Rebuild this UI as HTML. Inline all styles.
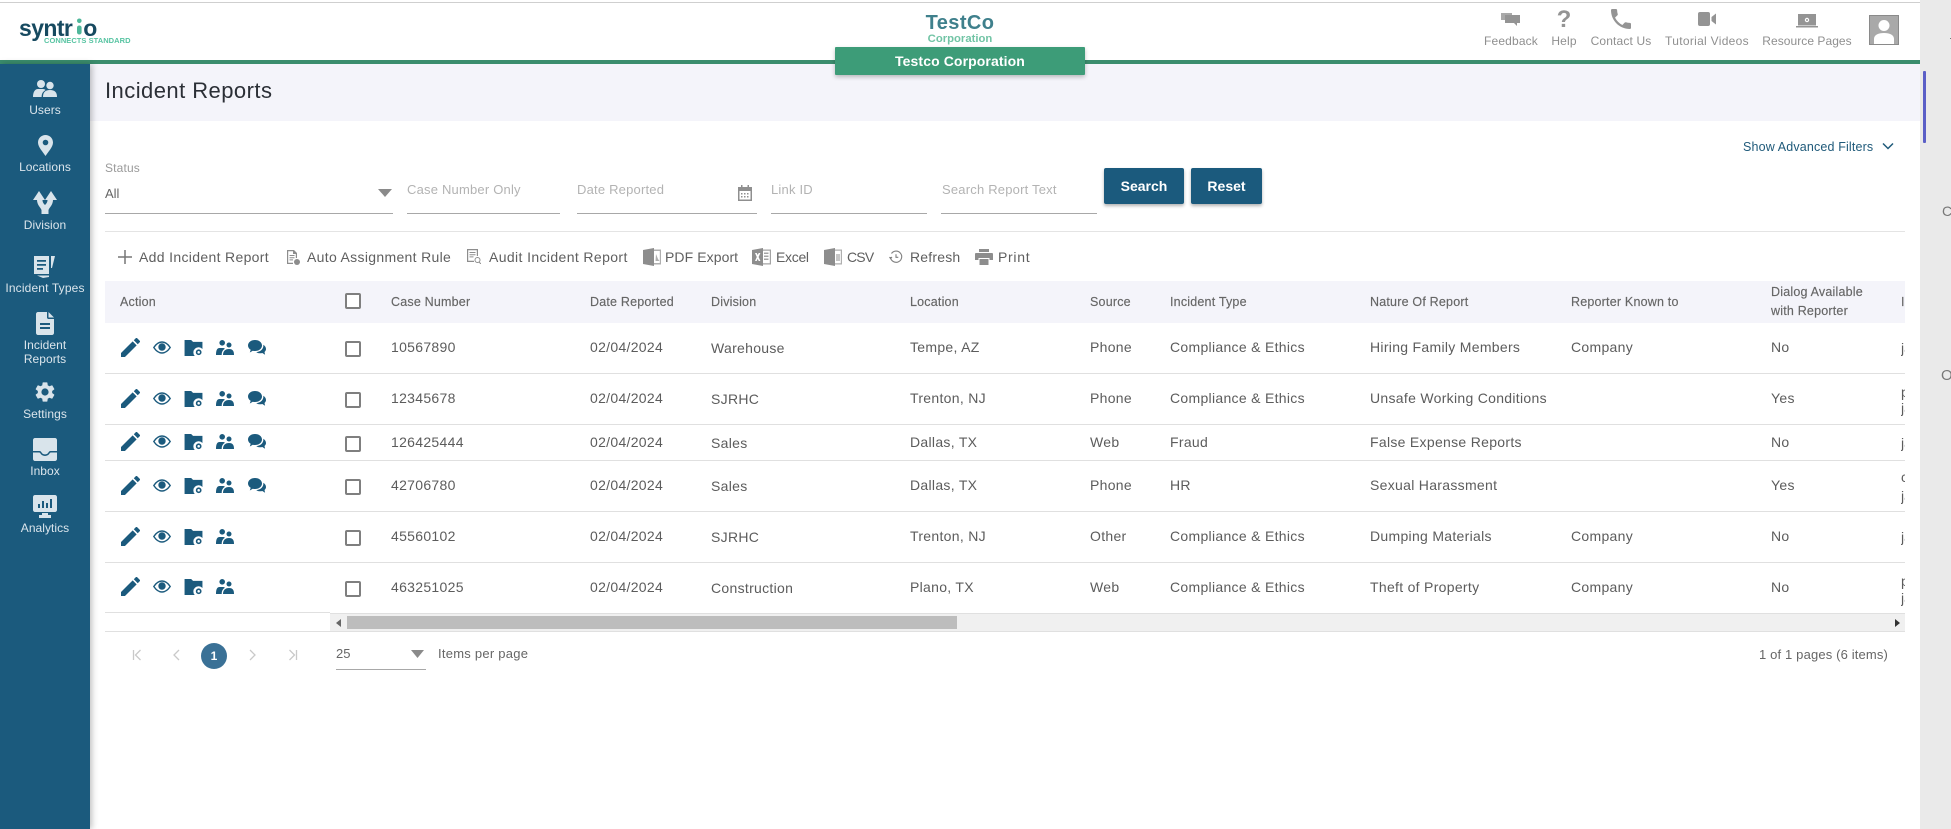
<!DOCTYPE html>
<html lang="en"><head><meta charset="utf-8"><title>Incident Reports</title>
<style>
html,body{margin:0;padding:0;width:1951px;height:829px;overflow:hidden;background:#fff}
body{position:relative;font-family:"Liberation Sans",sans-serif;color:#5c5c5c}
div,span,svg{position:absolute}
.t{white-space:nowrap;line-height:20px;height:20px}
#side{left:0;top:64px;width:90px;height:765px;background:#1b5a7d;box-shadow:2px 0 6px rgba(0,0,0,.25)}
.nl{left:0;width:90px;text-align:center;color:#dbe5ec;font-size:12px;line-height:14px;white-space:nowrap;letter-spacing:.05px}
.side-i{fill:#d9e4eb}
.hl{font-size:12px;color:#8f8f8f;letter-spacing:.15px;top:31px;transform:translateX(-50%)}
.hi{fill:#949494}
.ph{font-size:13px;color:#b3b3b3;letter-spacing:.2px}
.ul{height:1px;background:#a8a8a8;top:213px}
.btn{top:168px;height:36px;background:#1b5a7d;border-radius:2px;color:#fff;font-weight:bold;font-size:14px;line-height:36px;text-align:center;box-shadow:0 2px 3px rgba(0,0,0,.3)}
.tb{font-size:14px;top:247px;color:#5f5f5f;letter-spacing:.2px}
.tbi{fill:#8d8d8d}
.th{font-size:12.5px;color:#666;top:292px;letter-spacing:.2px;-webkit-text-stroke:.15px #666}
.cb{width:12px;height:12px;border:2px solid #7f7f7f;border-radius:2px;left:345px;background:#fff}
.sep{left:105px;width:1800px;height:1px;background:#e0e0e0}
.r{left:0;width:1905px;height:20px}
.r span{font-size:14px;color:#5c5c5c;line-height:20px;white-space:nowrap;top:-1px;letter-spacing:.3px}
.c1{left:391px}.c2{left:590px}.c3{left:711px;margin-top:1px}.c4{left:910px}.c5{left:1090px}.c6{left:1170px;letter-spacing:.2px}.c7{left:1370px}.c8{left:1571px}.c9{left:1771px}
.a{fill:#1b5a7d}
#clip{left:1901px;width:4px;top:323px;height:290px;overflow:hidden}
#clip span{left:0;font-size:14px;color:#5c5c5c;line-height:16px;white-space:nowrap}
.pg{fill:none;stroke:#c9c9c9;stroke-width:1.3}
</style></head><body>

<svg width="0" height="0" style="left:0;top:0">
<defs>
<symbol id="pencil" viewBox="3 3 18 18"><path d="M3 17.25V21h3.75L17.81 9.94l-3.75-3.75L3 17.25zM20.71 7.04a1 1 0 0 0 0-1.41l-2.34-2.34a1 1 0 0 0-1.41 0l-1.83 1.83 3.75 3.75 1.83-1.83z"/></symbol>
<symbol id="eye" viewBox="0 0 18 13"><path d="M.8 6.5C3.5 2.4 6.5 1 9 1s5.500 1.400 8.200 5.500C14.500 10.600 11.500 12 9 12S3.500 10.600.8 6.500Z" fill="none" stroke="#1b5a7d" stroke-width="1.400"/><circle cx="9" cy="6" r="3.700"/></symbol>
<symbol id="folder" viewBox="0 0 19 17"><path d="M0 0h7l2 2h10v7.500A5.200 5.200 0 0 0 10.800 17H0z"/><circle cx="15" cy="13" r="2.200" fill="none" stroke="#1b5a7d" stroke-width="1.700"/></symbol>
<symbol id="people" viewBox="0 0 18 15"><circle cx="6.200" cy="2.800" r="2.800"/><circle cx="13" cy="5" r="2.500"/><path d="M0 15c0-4.500 1-7 3.500-7H7c.8 0 1.500.3 2 .8C6.800 10 5.700 12 5.700 15z"/><path d="M7 15c0-3.600 2-6 6-6s5 2.400 5 6z"/></symbol>
<symbol id="chat" viewBox="0 0 18 15"><path d="M7 0c4 0 7 2.400 7 5.500S11 11 7 11c-.8 0-1.500-.1-2.200-.3L1.800 12.500l.9-2.700C1 8.800 0 7.200 0 5.500 0 2.400 3 0 7 0z"/><path d="M15.300 4.800C17 5.800 18 7.300 18 9c0 1.200-.6 2.200-1.500 3l.6 2.700-2.800-1.700c-.8.2-1.500.3-2.300.3-1.500 0-2.800-.5-3.700-1.200 4.200-.2 7.600-3.300 7-7.300z"/></symbol>
</defs>
</svg>

<!-- header -->
<div style="left:0;top:2px;width:1920px;height:1px;background:#cfcfcf"></div>
<div style="left:0;top:60px;width:1920px;height:4px;background:#3b8d6d"></div>

<span class="t" style="left:19px;top:16px;font-size:23px;font-weight:bold;color:#174a60;letter-spacing:-.6px;line-height:24px">syntr<span style="position:static;margin-left:11px">o</span></span>
<svg style="left:76px;top:17px" width="7" height="18"><circle cx="3.300" cy="3.800" r="2.300" fill="#4fb79a"/><rect x="1" y="8.500" width="4.600" height="9" rx="2.300" fill="#4fb79a"/></svg>
<span class="t" style="left:44px;top:31px;font-size:7.500px;font-weight:bold;color:#57c4a2;letter-spacing:.05px">CONNECTS STANDARD</span>

<span class="t" style="left:860px;width:200px;text-align:center;top:13px;font-size:20px;font-weight:bold;color:#3f808c;letter-spacing:.4px">TestCo</span>
<span class="t" style="left:860px;width:200px;text-align:center;top:29px;font-size:11.300px;font-weight:bold;color:#71c4a5">Corporation</span>

<!-- header icons -->
<svg class="hi" style="left:1501px;top:12px" width="19" height="14" viewBox="0 0 19 14"><path d="M0 1h11v7H0z" opacity=".8"/><path d="M4 3h15v8h-3v3l-3-3H4z"/></svg>
<span class="t" style="left:1564px;top:8px;transform:translateX(-50%);font-size:24px;font-weight:bold;color:#949494;line-height:24px">?</span>
<svg class="hi" style="left:1611px;top:9px" width="20" height="20" viewBox="3 3 18 18"><path d="M6.620 10.790c1.440 2.830 3.760 5.140 6.590 6.590l2.200-2.200c.27-.27.67-.36 1.020-.24 1.120.37 2.330.57 3.570.57.550 0 1 .45 1 1V20c0 .55-.45 1-1 1-9.390 0-17-7.610-17-17 0-.55.450-1 1-1h3.500c.55 0 1 .45 1 1 0 1.250.2 2.450.57 3.570.11.350.03.740-.25 1.020l-2.200 2.200z"/></svg>
<svg class="hi" style="left:1698px;top:12px" width="19" height="14" viewBox="0 0 19 14"><rect width="12" height="14" rx="2"/><path d="M13.500 5 18 1.500v11L13.500 9z"/></svg>
<svg class="hi" style="left:1796px;top:14px" width="22" height="14" viewBox="0 0 22 14"><path d="M2 0h18v11.500H2z"/><path d="M0 12h22v1.500H0z"/><circle cx="11" cy="6" r="2.200" fill="#fff"/><circle cx="11" cy="6" r="1" fill="#949494"/></svg>
<span class="t hl" style="left:1511px">Feedback</span>
<span class="t hl" style="left:1564px">Help</span>
<span class="t hl" style="left:1621px">Contact Us</span>
<span class="t hl" style="left:1707px;letter-spacing:.3px">Tutorial Videos</span>
<span class="t hl" style="left:1807px;letter-spacing:.05px">Resource Pages</span>
<div style="left:1869px;top:15px;width:28px;height:28px;border:1px solid #8a8a8a;background:#a9a9a9;overflow:hidden">
<svg style="left:0;top:0" width="28" height="28" viewBox="0 0 28 28" fill="#fff"><circle cx="14" cy="9.500" r="5.500"/><path d="M4 28v-5c0-4 4-6 10-6s10 2 10 6v5z"/></svg></div>

<!-- right gutter -->
<div style="left:1920px;top:0;width:31px;height:829px;background:#eaeaea"></div>
<div style="left:1923px;top:71px;width:3px;height:72px;background:#5b5fc7;border-radius:1px"></div>
<span class="t" style="left:1942px;top:201px;font-size:14px;color:#777">C</span>
<span class="t" style="left:1941px;top:366px;font-size:15px;color:#777">O</span>
<div style="left:1950px;top:38px;width:1px;height:1px;background:#777"></div>

<!-- title band -->
<div style="left:90px;top:64px;width:1830px;height:57px;background:#f4f4fa"></div>
<span class="t" style="left:105px;top:79px;font-size:22px;color:#2b2f36;letter-spacing:.45px;line-height:24px">Incident Reports</span>

<!-- selected company tag -->
<div style="left:835px;top:47px;width:250px;height:28px;z-index:5;background:#3d9c78;border-radius:1px;box-shadow:0 2px 4px rgba(0,0,0,.25);color:#fff;font-weight:bold;font-size:14px;line-height:28px;text-align:center;letter-spacing:.1px">Testco Corporation</div>

<!-- sidebar -->
<div id="side"></div>
<svg class="side-i" style="left:33px;top:80px" width="24" height="17" viewBox="0 0 24 17"><circle cx="8" cy="4" r="4"/><circle cx="17" cy="5.500" r="3.700"/><path d="M0 17c0-5 2-8 5-8h5c1 0 2 .4 2.600 1-2.600 1.500-4 3.600-4 7z"/><path d="M10 17c0-4.500 2-7 7-7s7 2.500 7 7z"/></svg>
<span class="nl" style="top:103px">Users</span>
<svg class="side-i" style="left:38px;top:135px" width="15" height="21" viewBox="0 0 15 21"><path fill-rule="evenodd" d="M7.500 0C3.400 0 0 3.300 0 7.500 0 12 5 17 7.500 21 10 17 15 12 15 7.500 15 3.300 11.600 0 7.500 0zm0 4.700a2.800 2.800 0 1 1 0 5.600 2.800 2.800 0 0 1 0-5.600z"/></svg>
<span class="nl" style="top:160px">Locations</span>
<svg class="side-i" style="left:33px;top:191px" width="24" height="23" viewBox="0 0 24 23"><path d="M6 0 12 9H9.500C9.500 11.500 11 13 12 14 13 13 14.500 11.500 14.500 9H12L18 0l6 9h-4c0 5-4 8-4.500 10v4h-7v-4C8 17 4 14 4 9H0z"/></svg>
<span class="nl" style="top:218px">Division</span>
<svg class="side-i" style="left:33px;top:255px" width="23" height="23" viewBox="0 0 23 23"><path fill-rule="evenodd" d="M1 1h15v18H1zM4 5v1.800h9V5zm0 4v1.800h9V9zm0 4v1.800h6V13z"/><path d="M18 1h4l-3 12h-1zM4 20.500h12v1.500l-6 1z"/></svg>
<span class="nl" style="top:281px;letter-spacing:.15px">Incident Types</span>
<svg class="side-i" style="left:36px;top:312px" width="18" height="23" viewBox="0 0 18 23"><path fill-rule="evenodd" d="M2 0h9v5.500c0 .8.700 1.500 1.500 1.500H18v14c0 1-.9 2-2 2H2c-1.100 0-2-1-2-2V2C0 1 .9 0 2 0zM4 11v2h10v-2zm0 4v2h10v-2z"/><path d="M12.500 0 18 5.500h-5.500z"/></svg>
<span class="nl" style="top:338px">Incident<br><span style="position:static;line-height:11px">Reports</span></span>
<svg class="side-i" style="left:33px;top:380px" width="24" height="24" viewBox="0 0 24 24"><path fill-rule="evenodd" d="M19.140 12.940c.04-.3.06-.61.06-.94 0-.32-.02-.64-.07-.94l2.030-1.580a.49.49 0 0 0 .12-.61l-1.920-3.320a.488.488 0 0 0-.59-.22l-2.390.96c-.5-.38-1.030-.7-1.620-.94l-.36-2.540a.484.484 0 0 0-.48-.41h-3.840c-.24 0-.43.17-.47.41l-.36 2.540c-.59.24-1.130.57-1.620.94l-2.390-.96c-.22-.08-.47 0-.59.22L2.740 8.870c-.12.21-.08.47.12.61l2.030 1.580c-.05.3-.09.63-.09.94s.02.64.07.94l-2.030 1.580a.49.49 0 0 0-.12.61l1.920 3.320c.12.22.37.29.59.22l2.390-.96c.5.38 1.030.7 1.620.94l.36 2.540c.05.24.24.41.48.41h3.840c.24 0 .44-.17.47-.41l.36-2.540c.59-.24 1.130-.56 1.620-.94l2.390.96c.22.08.47 0 .59-.22l1.920-3.320c.12-.22.07-.47-.12-.61l-2.010-1.580zM12 15.600A3.600 3.600 0 1 1 12 8.400a3.600 3.600 0 0 1 0 7.200z"/></svg>
<span class="nl" style="top:407px">Settings</span>
<svg class="side-i" style="left:33px;top:438px" width="24" height="23" viewBox="0 0 24 23"><path d="M2 0h20c1.100 0 2 .9 2 2v11h-6.500c-1 0-1.500.6-2 1.400-.6 1.200-2 2-3.500 2s-2.900-.8-3.500-2c-.5-.8-1-1.400-2-1.400H0V2C0 .9.900 0 2 0z"/><path d="M0 14.500h6.200c.6 0 .9.400 1.200.9C8.300 17 10 18 12 18s3.700-1 4.600-2.600c.3-.5.6-.9 1.200-.9H24V21c0 1.100-.9 2-2 2H2c-1.100 0-2-.9-2-2z"/></svg>
<span class="nl" style="top:464px">Inbox</span>
<svg class="side-i" style="left:33px;top:495px" width="24" height="23" viewBox="0 0 24 23"><path fill-rule="evenodd" d="M2 0h20c1.100 0 2 .9 2 2v13c0 1.100-.9 2-2 2H2c-1.100 0-2-.9-2-2V2C0 .9.900 0 2 0zm3 9v4h2V9zm4-3v7h2V6zm4 2v5h2V8zm4-4v9h2V4z"/><path d="M9 18h6v2h3v3H6v-3h3z"/></svg>
<span class="nl" style="top:521px">Analytics</span>

<!-- filters -->
<span class="t" style="left:1743px;top:137px;font-size:12.500px;color:#1f5a7a;letter-spacing:.15px">Show Advanced Filters</span>
<svg style="left:1882px;top:142px" width="12" height="9" viewBox="0 0 12 9"><path d="M1 1.500l5 5 5-5" fill="none" stroke="#1f5a7a" stroke-width="1.500"/></svg>

<span class="t" style="left:105px;top:158px;font-size:12px;color:#9a9a9a;letter-spacing:.15px">Status</span>
<span class="t" style="left:105px;top:184px;font-size:13px;color:#666">All</span>
<svg style="left:378px;top:189px" width="14" height="8"><path d="M0 0h14L7 8z" fill="#8a8a8a"/></svg>
<div class="ul" style="left:105px;width:288px"></div>

<span class="t ph" style="left:407px;top:180px">Case Number Only</span>
<div class="ul" style="left:407px;width:153px"></div>
<span class="t ph" style="left:577px;top:180px">Date Reported</span>
<svg style="left:738px;top:185px" width="14" height="16" viewBox="0 0 14 16"><path fill="#8f8f8f" fill-rule="evenodd" d="M3 0h1.500v2h5V0H11v2h3v14H0V2h3zM1.500 6v8.500h11V6zM3 8h1.500v1.500H3zm3 0h1.500v1.500H6zm3 0h1.500v1.500H9zm-6 3h1.500v1.500H3zm3 0h1.500v1.500H6zm3 0h1.500v1.500H9z"/></svg>
<div class="ul" style="left:577px;width:180px"></div>
<span class="t ph" style="left:771px;top:180px">Link ID</span>
<div class="ul" style="left:771px;width:156px"></div>
<span class="t ph" style="left:942px;top:180px">Search Report Text</span>
<div class="ul" style="left:941px;width:156px"></div>
<div class="btn" style="left:1104px;width:80px">Search</div>
<div class="btn" style="left:1191px;width:71px">Reset</div>
<div style="left:105px;top:231px;width:1800px;height:1px;background:#e4e4e4"></div>

<!-- toolbar -->
<svg style="left:118px;top:250px" width="14" height="14"><path d="M7 0v14M0 7h14" stroke="#777" stroke-width="1.500"/></svg>
<span class="t tb" style="left:139px;letter-spacing:.33px">Add Incident Report</span>
<svg class="tbi" style="left:287px;top:250px" width="13" height="15" viewBox="0 0 13 15"><path fill-rule="evenodd" d="M0 0h7l3 3v5h-1.200V4H6V1.200H1.200v11.600H6V14H0zM2.500 5h5v1h-5zm0 2.200h5v1h-5zm0 2.200h3.500v1H2.500z"/><circle cx="10" cy="12" r="3"/></svg>
<span class="t tb" style="left:307px;letter-spacing:.32px">Auto Assignment Rule</span>
<svg class="tbi" style="left:467px;top:249px" width="14" height="15" viewBox="0 0 14 15"><path fill-rule="evenodd" d="M0 0h11v7H9.800V1.200H1.200v10.600H7V13H0zM2.500 3h6v1h-6zm0 2.200h6v1h-6zm0 2.200h4v1h-4z"/><circle cx="10.500" cy="11" r="2.500" fill="none" stroke="#8d8d8d"/><path d="M12 13l2 2" stroke="#8d8d8d"/></svg>
<span class="t tb" style="left:489px;letter-spacing:.38px">Audit Incident Report</span>
<svg class="tbi" style="left:643px;top:248px" width="18" height="18" viewBox="0 0 18 18"><path d="M0 2l11-2v18L0 16z"/><path d="M11 1.500h7V16.500h-7V15h5.800V3H11z" opacity=".7"/><path d="M13 6l2 5 1.500 2h-4z" opacity=".7"/></svg>
<span class="t tb" style="left:665px;letter-spacing:.08px">PDF Export</span>
<svg class="tbi" style="left:752px;top:248px" width="19" height="18" viewBox="0 0 19 18"><path d="M0 2l11-2v18L0 16z"/><path fill="#fff" d="M3 5h1.700l1 2 1-2h1.700L6.600 9l1.800 4H6.700l-1-2.200L4.700 13H3l1.800-4z"/><path d="M11 1.500h8v15h-8v-1.200h6.800V2.700H11zM12 4.500h4.500v1.500H12zm0 3h4.500V9H12zm0 3h4.500V12H12z" opacity=".8"/></svg>
<span class="t tb" style="left:776px;letter-spacing:-.3px">Excel</span>
<svg class="tbi" style="left:824px;top:248px" width="18" height="18" viewBox="0 0 18 18"><path d="M0 2l11-2v18L0 16z"/><path d="M11 1.500h7v15h-7v-1.200h5.800V2.700H11z" opacity=".7"/><path d="M12 6h4v7h-4z" opacity=".5"/></svg>
<span class="t tb" style="left:847px;letter-spacing:-.8px">CSV</span>
<svg style="left:889px;top:250px" width="14" height="14" viewBox="0 0 14 14" fill="none" stroke="#7f7f7f" stroke-width="1.100"><path d="M2.500 3.500A5.600 5.600 0 1 1 1.500 7"/><path d="M.5 7l1 1.500L3 7" /><path d="M7 4.200V7.300h2.300"/></svg>
<span class="t tb" style="left:910px">Refresh</span>
<svg class="tbi" style="left:975px;top:249px" width="18" height="16" viewBox="0 0 18 16"><path fill-rule="evenodd" d="M4 0h10v3H4zM1 4h16c.6 0 1 .4 1 1v6h-3.500V9h-11v2H0V5c0-.6.400-1 1-1zM4.500 10h9v6h-9z"/></svg>
<span class="t tb" style="left:998px;letter-spacing:.7px">Print</span>

<!-- table header -->
<div style="left:105px;top:281px;width:1800px;height:42px;background:#f4f4fa"></div>
<span class="t th" style="left:120px">Action</span>
<div class="cb" style="top:293px"></div>
<span class="t th" style="left:391px">Case Number</span>
<span class="t th" style="left:590px">Date Reported</span>
<span class="t th" style="left:711px">Division</span>
<span class="t th" style="left:910px">Location</span>
<span class="t th" style="left:1090px">Source</span>
<span class="t th" style="left:1170px">Incident Type</span>
<span class="t th" style="left:1370px">Nature Of Report</span>
<span class="t th" style="left:1571px">Reporter Known to</span>
<span class="t th" style="left:1771px;top:282px">Dialog Available</span>
<span class="t th" style="left:1771px;top:301px">with Reporter</span>
<span class="t th" style="left:1901px">I</span>

<div class="sep" style="top:373px"></div>
<div class="sep" style="top:424px"></div>
<div class="sep" style="top:460px"></div>
<div class="sep" style="top:511px"></div>
<div class="sep" style="top:562px"></div>

<!-- rows -->
<div class="r" style="top:338px"><span class="c1">10567890</span><span class="c2">02/04/2024</span><span class="c3">Warehouse</span><span class="c4">Tempe, AZ</span><span class="c5">Phone</span><span class="c6">Compliance &amp; Ethics</span><span class="c7">Hiring Family Members</span><span class="c8">Company</span><span class="c9">No</span></div>
<div class="r" style="top:389px"><span class="c1">12345678</span><span class="c2">02/04/2024</span><span class="c3">SJRHC</span><span class="c4">Trenton, NJ</span><span class="c5">Phone</span><span class="c6">Compliance &amp; Ethics</span><span class="c7">Unsafe Working Conditions</span><span class="c9">Yes</span></div>
<div class="r" style="top:433px"><span class="c1">126425444</span><span class="c2">02/04/2024</span><span class="c3">Sales</span><span class="c4">Dallas, TX</span><span class="c5">Web</span><span class="c6">Fraud</span><span class="c7">False Expense Reports</span><span class="c9">No</span></div>
<div class="r" style="top:476px"><span class="c1">42706780</span><span class="c2">02/04/2024</span><span class="c3">Sales</span><span class="c4">Dallas, TX</span><span class="c5">Phone</span><span class="c6">HR</span><span class="c7">Sexual Harassment</span><span class="c9">Yes</span></div>
<div class="r" style="top:527px"><span class="c1">45560102</span><span class="c2">02/04/2024</span><span class="c3">SJRHC</span><span class="c4">Trenton, NJ</span><span class="c5">Other</span><span class="c6">Compliance &amp; Ethics</span><span class="c7">Dumping Materials</span><span class="c8">Company</span><span class="c9">No</span></div>
<div class="r" style="top:578px"><span class="c1">463251025</span><span class="c2">02/04/2024</span><span class="c3">Construction</span><span class="c4">Plano, TX</span><span class="c5">Web</span><span class="c6">Compliance &amp; Ethics</span><span class="c7">Theft of Property</span><span class="c8">Company</span><span class="c9">No</span></div>

<div id="clip">
<span style="top:17px">jane</span>
<span style="top:61px">pat</span><span style="top:77px">jane</span>
<span style="top:112px">jane</span>
<span style="top:146px">chris</span><span style="top:165px">jane</span>
<span style="top:206px">jane</span>
<span style="top:250px">pat</span><span style="top:267px">jane</span>
</div>

<!-- checkboxes -->
<div class="cb" style="top:341px"></div>
<div class="cb" style="top:392px"></div>
<div class="cb" style="top:436px"></div>
<div class="cb" style="top:479px"></div>
<div class="cb" style="top:530px"></div>
<div class="cb" style="top:581px"></div>

<!-- action icons row 1 -->
<svg class="a" style="left:121px;top:338px" width="19" height="19"><use href="#pencil"/></svg><svg class="a" style="left:153px;top:341px" width="18" height="13"><use href="#eye"/></svg><svg class="a" style="left:184px;top:340px" width="19" height="16"><use href="#folder"/></svg><svg class="a" style="left:216px;top:340px" width="18" height="15"><use href="#people"/></svg><svg class="a" style="left:248px;top:340px" width="18" height="15"><use href="#chat"/></svg>
<!-- row 2 -->
<svg class="a" style="left:121px;top:389px" width="19" height="19"><use href="#pencil"/></svg><svg class="a" style="left:153px;top:392px" width="18" height="13"><use href="#eye"/></svg><svg class="a" style="left:184px;top:391px" width="19" height="16"><use href="#folder"/></svg><svg class="a" style="left:216px;top:391px" width="18" height="15"><use href="#people"/></svg><svg class="a" style="left:248px;top:391px" width="18" height="15"><use href="#chat"/></svg>
<!-- row 3 -->
<svg class="a" style="left:121px;top:432px" width="19" height="19"><use href="#pencil"/></svg><svg class="a" style="left:153px;top:435px" width="18" height="13"><use href="#eye"/></svg><svg class="a" style="left:184px;top:434px" width="19" height="16"><use href="#folder"/></svg><svg class="a" style="left:216px;top:434px" width="18" height="15"><use href="#people"/></svg><svg class="a" style="left:248px;top:434px" width="18" height="15"><use href="#chat"/></svg>
<!-- row 4 -->
<svg class="a" style="left:121px;top:476px" width="19" height="19"><use href="#pencil"/></svg><svg class="a" style="left:153px;top:479px" width="18" height="13"><use href="#eye"/></svg><svg class="a" style="left:184px;top:478px" width="19" height="16"><use href="#folder"/></svg><svg class="a" style="left:216px;top:478px" width="18" height="15"><use href="#people"/></svg><svg class="a" style="left:248px;top:478px" width="18" height="15"><use href="#chat"/></svg>
<!-- row 5 -->
<svg class="a" style="left:121px;top:527px" width="19" height="19"><use href="#pencil"/></svg><svg class="a" style="left:153px;top:530px" width="18" height="13"><use href="#eye"/></svg><svg class="a" style="left:184px;top:529px" width="19" height="16"><use href="#folder"/></svg><svg class="a" style="left:216px;top:529px" width="18" height="15"><use href="#people"/></svg>
<!-- row 6 -->
<svg class="a" style="left:121px;top:577px" width="19" height="19"><use href="#pencil"/></svg><svg class="a" style="left:153px;top:580px" width="18" height="13"><use href="#eye"/></svg><svg class="a" style="left:184px;top:579px" width="19" height="16"><use href="#folder"/></svg><svg class="a" style="left:216px;top:579px" width="18" height="15"><use href="#people"/></svg>

<!-- scrollbar -->
<div style="left:105px;top:612px;width:225px;height:1px;background:#e0e0e0"></div>
<div style="left:105px;top:631px;width:1800px;height:1px;background:#e0e0e0"></div>
<div style="left:330px;top:613px;width:1575px;height:18px;background:#f0f0f0;border-top:1px solid #e0e0e0;box-sizing:border-box"></div>
<div style="left:347px;top:616px;width:610px;height:13px;background:#bdbdbd"></div>
<svg style="left:336px;top:619px" width="5" height="8"><path d="M5 0v8L0 4z" fill="#666"/></svg>
<svg style="left:1895px;top:619px" width="5" height="8"><path d="M0 0v8l5-4z" fill="#333"/></svg>

<!-- pagination -->
<svg class="pg" style="left:132px;top:649px" width="10" height="12"><path d="M1.500 1v10M8.500 1l-5 5 5 5"/></svg>
<svg class="pg" style="left:172px;top:649px" width="8" height="12"><path d="M7 1 2 6l5 5"/></svg>
<div style="left:201px;top:643px;width:26px;height:26px;border-radius:50%;background:#3a7196;color:#fff;font-size:12px;font-weight:bold;text-align:center;line-height:26px">1</div>
<svg class="pg" style="left:249px;top:649px" width="8" height="12"><path d="M1 1l5 5-5 5"/></svg>
<svg class="pg" style="left:288px;top:649px" width="10" height="12"><path d="M8.500 1v10M1.500 1l5 5-5 5"/></svg>
<span class="t" style="left:336px;top:644px;font-size:13px;color:#666">25</span>
<svg style="left:411px;top:650px" width="13" height="8"><path d="M0 0h13L6.500 8z" fill="#8a8a8a"/></svg>
<div style="left:336px;top:669px;width:90px;height:1px;background:#a8a8a8"></div>
<span class="t" style="left:438px;top:644px;font-size:13px;color:#666;letter-spacing:.25px">Items per page</span>
<span class="t" style="left:1759px;top:645px;font-size:13px;color:#666;letter-spacing:.15px">1 of 1 pages (6 items)</span>

</body></html>
